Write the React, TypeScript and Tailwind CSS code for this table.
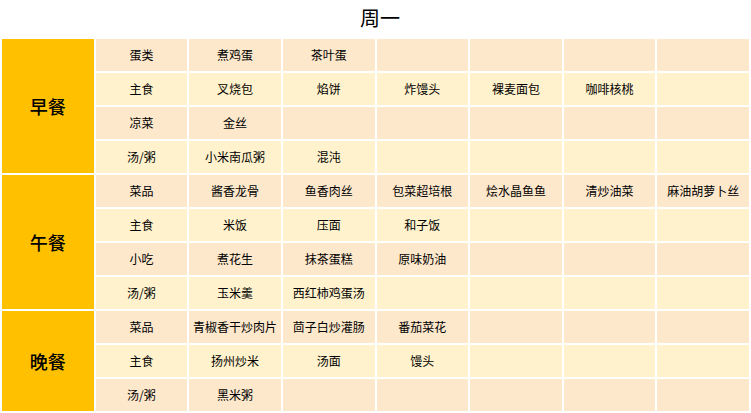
const meals: { name: string; rows: string[][] }[] = [
  {
    name: '早餐',
    rows: [
      ['蛋类', '煮鸡蛋', '茶叶蛋'],
      ['主食', '叉烧包', '焰饼', '炸馒头', '裸麦面包', '咖啡核桃'],
      ['凉菜', '金丝'],
      ['汤/粥', '小米南瓜粥', '混沌'],
    ],
  },
  {
    name: '午餐',
    rows: [
      ['菜品', '酱香龙骨', '鱼香肉丝', '包菜超培根', '烩水晶鱼鱼', '清炒油菜', '麻油胡萝卜丝'],
      ['主食', '米饭', '压面', '和子饭'],
      ['小吃', '煮花生', '抹茶蛋糕', '原味奶油'],
      ['汤/粥', '玉米羹', '西红柿鸡蛋汤'],
    ],
  },
  {
    name: '晚餐',
    rows: [
      ['菜品', '青椒香干炒肉片', '茴子白炒灌肠', '番茄菜花'],
      ['主食', '扬州炒米', '汤面', '馒头'],
      ['汤/粥', '黑米粥'],
    ],
  },
];

const fontStack = { fontFamily: '"Noto Sans CJK SC", "Noto Sans", sans-serif' };

export default function App() {
  return (
    <div className="w-[751px] h-[413px] overflow-hidden bg-white text-black" style={fontStack}>
      <div className="h-[39px] flex items-center justify-center pl-[9px] pb-[3px] text-[20px] leading-none">
        周一
      </div>
      <div className="flex flex-col gap-[2px] px-[2px]">
        {meals.map((meal) => (
          <div
            key={meal.name}
            className="grid grid-cols-8 gap-[2px] auto-rows-[32px]"
          >
            <div
              className={
                'bg-[#FFC000] flex items-center justify-center text-[18px] font-medium ' +
                (meal.rows.length === 4 ? 'row-span-4' : 'row-span-3')
              }
            >
              {meal.name}
            </div>
            {meal.rows.map((row, ri) =>
              Array.from({ length: 7 }).map((_, ci) => (
                <div
                  key={ri + '-' + ci}
                  className={
                    'flex items-center justify-center text-[12px] whitespace-nowrap ' +
                    (ri % 2 === 0 ? 'bg-[#FDE8CC]' : 'bg-[#FFF2CC]')
                  }
                >
                  {row[ci] ?? ''}
                </div>
              ))
            )}
          </div>
        ))}
      </div>
    </div>
  );
}
